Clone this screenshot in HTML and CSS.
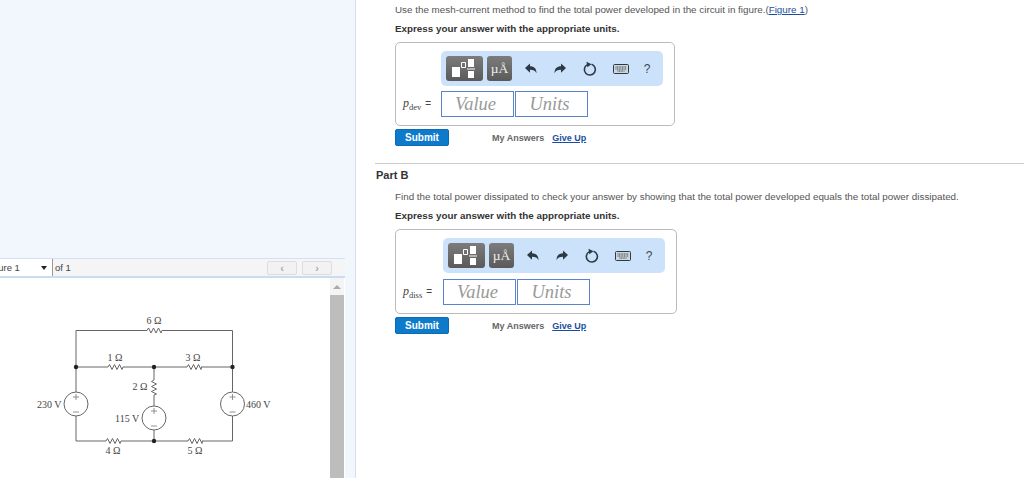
FILE: index.html
```html
<!DOCTYPE html>
<html lang="en">

<head>
    <meta charset="UTF-8">
    <title>Mesh-current problem</title>
    <link rel="stylesheet" href="styles.css">
</head>

<body>
<div class="page">
    <aside class="side">
        <div class="figure-panel">
            <div class="figure-bar">
                <div class="figure-select"><span class="figure-name">Figure 1</span><span class="caret"></span></div>
                <span class="figure-of">of 1</span>
                <div class="pager">
                    <button class="page-btn">&lsaquo;</button>
                    <button class="page-btn">&rsaquo;</button>
                </div>
            </div>
            <div class="figure-body">
                <div class="figure-canvas">
                    <svg class="circuit" width="330" height="200" viewBox="0 278 330 200">
                        <g class="wire">
                            <path d="M76 392V330.5H147M162 330.5H232.5V392"/>
                            <path d="M76 367H108M123 367H187M201 367H232.5"/>
                            <path d="M76 416V441H106M121 441H188M202 441H232.5V416"/>
                            <path d="M154 367V380M154 395V406M154 430V441"/>
                            <circle cx="76" cy="404" r="12"/>
                            <circle cx="232.5" cy="404" r="12"/>
                            <circle cx="154" cy="418" r="12"/>
                            <path d="M147 330.5l1.5-2.5 2.5 5 2.5-5 2.5 5 2.5-5 2.5 5 1 -2.5"/>
                            <path d="M108 367l1.5-2.5 2.5 5 2.5-5 2.5 5 2.5-5 2.5 5 1-2.5"/>
                            <path d="M187 367l1.5-2.5 2.5 5 2.5-5 2.5 5 2.5-5 2.5 5 .5-2.5"/>
                            <path d="M106 441l1.5-2.5 2.5 5 2.5-5 2.5 5 2.5-5 2.5 5 1-2.5"/>
                            <path d="M188 441l1.5-2.5 2.5 5 2.5-5 2.5 5 2.5-5 2.5 5 .5-2.5"/>
                            <path d="M154 380l-2.5 1.5 5 2.5-5 2.5 5 2.5-5 2.5 5 2.5-2.5 1"/>
                        </g>
                        <g class="sign">
                            <path d="M73 397h6M76 394v6M73 412h6"/>
                            <path d="M229.5 397h6M232.5 394v6M229.5 412h6"/>
                            <path d="M151 411h6M154 408v6M151 426h6"/>
                        </g>
                        <g class="dot">
                            <circle cx="76" cy="367" r="2.2"/>
                            <circle cx="154" cy="367" r="2.2"/>
                            <circle cx="232.5" cy="367" r="2.2"/>
                            <circle cx="154" cy="441" r="2.2"/>
                        </g>
                        <g class="circuit-text">
                            <text x="154" y="324" text-anchor="middle">6 Ω</text>
                            <text x="115" y="361" text-anchor="middle">1 Ω</text>
                            <text x="193" y="361" text-anchor="middle">3 Ω</text>
                            <text x="140" y="390" text-anchor="middle">2 Ω</text>
                            <text x="113" y="454" text-anchor="middle">4 Ω</text>
                            <text x="195" y="454" text-anchor="middle">5 Ω</text>
                            <text x="37" y="408">230 V</text>
                            <text x="115" y="422">115 V</text>
                            <text x="246" y="408">460 V</text>
                        </g>
                    </svg>
                </div>
                <div class="scrollbar">
                    <div class="scroll-up"><span class="scroll-arrow"></span></div>
                    <div class="scroll-thumb"></div>
                </div>
            </div>
        </div>
    </aside>

    <main class="content">
        <section class="part part-a">
            <p class="text">Use the mesh-current method to find the total power developed in the circuit in figure.(<a href="#">Figure 1</a>)</p>
            <p class="text strong">Express your answer with the appropriate units.</p>
            <div class="answer-box">
                <div class="answer-label"><i>p</i><sub>dev</sub> <span class="eq">=</span></div>
                <div class="toolbar">
                    <span class="tool-btn tool-template">
                        <svg width="37" height="25" viewBox="0 0 37 25"><path class="tpl-white" d="M6 11h8v10H6zM22 3h6v8h-6zM22 15h6v7h-6zM21 12.500h8v1h-8z"/><path class="tpl-line" d="M15.500 6.500h4v5h-4z"/></svg>
                    </span>
                    <span class="tool-btn tool-unit">µÅ</span>
                    <span class="tool-icons">
                        <svg class="icon" width="14" height="14" viewBox="0 0 14 14"><path d="M1 6l5-4.500v2.800c4 0 6.500 2 6.500 7-1.300-2.600-3-3.500-6.500-3.500v3z"/></svg>
                        <svg class="icon" width="14" height="14" viewBox="0 0 14 14"><path d="M13 6L8 1.500v2.800c-4 0-6.500 2-6.500 7C2.800 8.700 4.500 7.800 8 7.800v3z"/></svg>
                        <svg class="icon" width="16" height="16" viewBox="0 0 16 16"><path class="ring" d="M5.500 3.600a5.500 5.500 0 1 0 4 -.3"/><path d="M4.500 .8l5 2.400-4.200 3z"/></svg>
                        <svg class="icon" width="16" height="12" viewBox="0 0 16 12"><rect class="key-frame" x=".5" y="1.500" width="15" height="9" rx="1"/><path class="key-row" d="M2.500 4h11M2.500 6h11M4.500 8h7"/></svg>
                        <span class="help">?</span>
                    </span>
                </div>
                <div class="inputs">
                    <span class="field">Value</span>
                    <span class="field">Units</span>
                </div>
            </div>
            <div class="actions">
                <button class="submit">Submit</button>
                <span class="my-answers">My Answers</span>
                <a class="give-up" href="#">Give Up</a>
            </div>
        </section>

        <section class="part part-b">
            <h2>Part B</h2>
            <div class="part-body">
                <p class="text">Find the total power dissipated to check your answer by showing that the total power developed equals the total power dissipated.</p>
                <p class="text strong">Express your answer with the appropriate units.</p>
                <div class="answer-box">
                    <div class="answer-label"><i>p</i><sub>diss</sub> <span class="eq">=</span></div>
                    <div class="toolbar">
                        <span class="tool-btn tool-template">
                            <svg width="37" height="25" viewBox="0 0 37 25"><path class="tpl-white" d="M6 11h8v10H6zM22 3h6v8h-6zM22 15h6v7h-6zM21 12.500h8v1h-8z"/><path class="tpl-line" d="M15.500 6.500h4v5h-4z"/></svg>
                        </span>
                        <span class="tool-btn tool-unit">µÅ</span>
                        <span class="tool-icons">
                            <svg class="icon" width="14" height="14" viewBox="0 0 14 14"><path d="M1 6l5-4.500v2.800c4 0 6.500 2 6.500 7-1.300-2.600-3-3.500-6.500-3.500v3z"/></svg>
                            <svg class="icon" width="14" height="14" viewBox="0 0 14 14"><path d="M13 6L8 1.500v2.800c-4 0-6.500 2-6.500 7C2.800 8.700 4.500 7.800 8 7.800v3z"/></svg>
                            <svg class="icon" width="16" height="16" viewBox="0 0 16 16"><path class="ring" d="M5.500 3.600a5.500 5.500 0 1 0 4 -.3"/><path d="M4.500 .8l5 2.400-4.200 3z"/></svg>
                            <svg class="icon" width="16" height="12" viewBox="0 0 16 12"><rect class="key-frame" x=".5" y="1.500" width="15" height="9" rx="1"/><path class="key-row" d="M2.500 4h11M2.500 6h11M4.500 8h7"/></svg>
                            <span class="help">?</span>
                        </span>
                    </div>
                    <div class="inputs">
                        <span class="field">Value</span>
                        <span class="field">Units</span>
                    </div>
                </div>
                <div class="actions">
                    <button class="submit">Submit</button>
                    <span class="my-answers">My Answers</span>
                    <a class="give-up" href="#">Give Up</a>
                </div>
            </div>
        </section>
    </main>
</div>
</body>
</html>
```

FILE: styles.css
```css
html, body {
    margin: 0;
    padding: 0;
    height: 478px;
    overflow: hidden;
    background-color: white;
    font-family: 'Liberation Sans', Arial, sans-serif;
}

.page {
    display: flex;
    height: 478px;
}

/* left side with the figure */
.side {
    width: 355px;
    flex: none;
    box-sizing: content-box;
    padding-top: 258px;
    background-color: #f2f7fd;
    border-right: 1px solid #d5dfeb;
}

.figure-panel {
    width: 345px;
    height: 220px;
    background-color: white;
    display: flex;
    flex-direction: column;
}

.figure-bar {
    height: 17px;
    flex: none;
    display: flex;
    align-items: center;
    background-color: #f5f5f5;
    border-top: 1px solid #d3e2f2;
    border-bottom: 2px solid #c9dcf2;
    font-size: 9.500px;
    color: #444;
}

.figure-select {
    width: 52px;
    height: 17px;
    flex: none;
    display: flex;
    align-items: center;
    overflow: hidden;
    background-color: white;
    border-right: 1px solid #999;
}

.figure-name {
    flex: none;
    margin-left: -15px;
}

.caret {
    margin-left: 21px;
    border-left: 3px solid transparent;
    border-right: 3px solid transparent;
    border-top: 4px solid #222;
}

.figure-of {
    margin-left: 2px;
}

.pager {
    margin-left: auto;
    margin-right: 13px;
    display: flex;
    gap: 5px;
}

.page-btn {
    width: 30px;
    height: 14px;
    padding: 0;
    border: 1px solid #ddd;
    border-radius: 2px;
    background-color: #f2f2f2;
    color: #aaa;
    font-size: 11px;
    font-weight: bold;
    line-height: 10px;
}

.figure-body {
    flex: 1;
    display: flex;
    min-height: 0;
}

.figure-canvas {
    flex: 1;
    overflow: hidden;
}

.circuit {
    display: block;
}

.wire path, .wire circle {
    fill: none;
    stroke: #666;
    stroke-width: 1;
}

.sign path {
    fill: none;
    stroke: #777;
    stroke-width: .8;
}

.dot circle {
    fill: #222;
}

.circuit-text text {
    font-family: 'Liberation Serif', serif;
    font-size: 10px;
    fill: #444;
}

.scrollbar {
    width: 14px;
    flex: none;
    margin-right: 1px;
    background-color: #f4f4f4;
    display: flex;
    flex-direction: column;
}

.scroll-up {
    height: 17px;
    display: flex;
    justify-content: center;
    align-items: center;
}

.scroll-arrow {
    border-left: 4px solid transparent;
    border-right: 4px solid transparent;
    border-bottom: 4px solid #aaa;
}

.scroll-thumb {
    flex: 1;
    background-color: #bdbdbd;
}

/* right side with the question */
.content {
    flex: 1;
    min-width: 0;
    padding-left: 19px;
}

.part-a {
    padding-left: 20px;
    padding-top: 1px;
    padding-bottom: 17px;
    border-bottom: 1px solid #ccc;
}

.part-b h2 {
    margin: 0;
    padding-left: 1px;
    padding-top: 1px;
    font-size: 11px;
    line-height: 20px;
    font-weight: bold;
    color: #333;
}

.part-body {
    padding-left: 20px;
    padding-top: 3px;
}

.text {
    margin: 0;
    font-size: 9.830px;
    line-height: 18px;
    color: #555;
    white-space: nowrap;
}

.text a {
    color: #1a4fa0;
}

.strong {
    margin-top: 1px;
    font-weight: bold;
    color: #333;
}

.answer-box {
    width: fit-content;
    box-sizing: border-box;
    margin-top: 4px;
    padding: 8px 11px 8px 7px;
    display: grid;
    grid-template-columns: auto 222px;
    column-gap: 8px;
    row-gap: 5px;
    border: 1px solid #bbb;
    border-radius: 5px;
}

.part-b .answer-box {
    row-gap: 6px;
}

.answer-label {
    grid-column: 1;
    grid-row: 2;
    align-self: center;
    width: 30px;
    font-family: 'Liberation Serif', serif;
    font-size: 12px;
    color: #444;
    white-space: nowrap;
}

.part-b .answer-label {
    width: 32px;
}

.answer-label sub {
    font-size: 8.500px;
}

.eq {
    margin-left: 1px;
    font-family: 'Liberation Sans', sans-serif;
    font-size: 10px;
}

.toolbar {
    grid-column: 2;
    grid-row: 1;
    height: 35px;
    box-sizing: border-box;
    padding: 5px;
    display: flex;
    gap: 4px;
    align-items: center;
    background-color: #cce2fb;
    border-radius: 5px;
}

.tool-btn {
    height: 25px;
    display: flex;
    align-items: center;
    justify-content: center;
    background: linear-gradient(#7c7c7c, #5a5a5a);
    border-radius: 3px;
}

.tool-template {
    width: 37px;
}

.tool-unit {
    width: 25px;
    color: #f0f0f0;
    font-family: 'Liberation Serif', serif;
    font-size: 13.500px;
}

.tpl-white {
    fill: white;
}

.tpl-line {
    fill: none;
    stroke: white;
    stroke-width: 1;
}

.tool-icons {
    flex: 1;
    display: flex;
    align-items: center;
    justify-content: space-between;
    padding: 0 7.500px 0 8px;
}

.icon {
    fill: #2c3a44;
}

.ring {
    fill: none;
    stroke: #2c3a44;
    stroke-width: 1.600;
}

.key-frame {
    fill: #cfd6dd;
    stroke: #2c3a44;
    stroke-width: 1;
}

.key-row {
    fill: none;
    stroke: #2c3a44;
    stroke-width: 1;
    stroke-dasharray: 1 .6;
}

.help {
    font-size: 12px;
    color: #3c4650;
}

.inputs {
    grid-column: 2;
    grid-row: 2;
    display: flex;
    gap: 1px;
}

.field {
    width: 73px;
    height: 26px;
    box-sizing: border-box;
    display: flex;
    align-items: center;
    padding: 1px 4px 0 0;
    justify-content: center;
    border: 1px solid #5b83c9;
    font-family: 'Liberation Serif', serif;
    font-style: italic;
    font-size: 18.500px;
    color: #999;
}

.actions {
    margin-top: 3px;
    height: 17px;
    display: flex;
    align-items: center;
    font-size: 9px;
    font-weight: bold;
}

.submit {
    width: 54px;
    height: 17px;
    padding: 0;
    border: 1px solid #0b6cb5;
    border-radius: 2px;
    background-color: #0d7acb;
    color: white;
    font-family: inherit;
    font-size: 10px;
    font-weight: bold;
}

.my-answers {
    margin-left: 43px;
    color: #666;
}

.give-up {
    margin-left: 8px;
    color: #1a4fa0;
}
```
